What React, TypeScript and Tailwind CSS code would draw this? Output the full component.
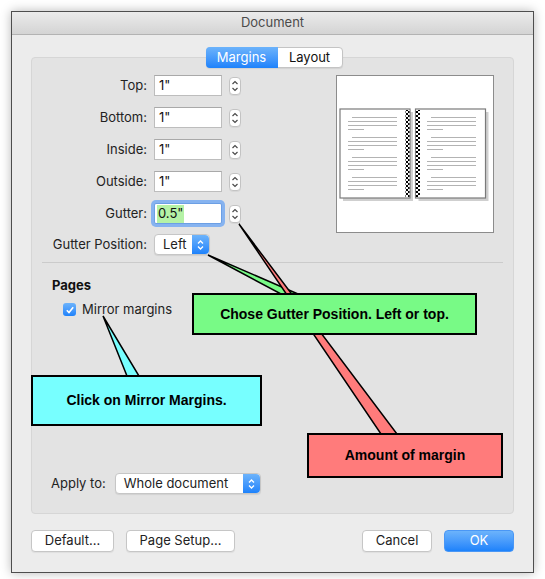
import React from 'react';

const font = { fontFamily: 'Inter, "Liberation Sans", sans-serif' };

const Stepper: React.FC = () => (
  <div className="w-[12px] h-[18px] rounded-[4px] border border-[#c3c3c3] bg-white flex items-center justify-center shadow-[0_1px_0_rgba(0,0,0,0.05)]">
    <svg width="10" height="16" viewBox="0 0 10 16">
      <path d="M2.5 6 L5 3.5 L7.5 6" fill="none" stroke="#4a4a4a" strokeWidth="1.2" />
      <path d="M2.5 10 L5 12.5 L7.5 10" fill="none" stroke="#4a4a4a" strokeWidth="1.2" />
    </svg>
  </div>
);

const BlueArrows: React.FC = () => (
  <div className="w-[17px] h-full rounded-r-[4px] bg-gradient-to-b from-[#6cb3fb] to-[#1c82fb] flex items-center justify-center">
    <svg width="9" height="14" viewBox="0 0 9 14">
      <path d="M2 5.5 L4.5 3 L7 5.5" fill="none" stroke="#fff" strokeWidth="1.3" />
      <path d="M2 8.5 L4.5 11 L7 8.5" fill="none" stroke="#fff" strokeWidth="1.3" />
    </svg>
  </div>
);

const Select: React.FC<{ label: string; width: string }> = ({ label, width }) => (
  <div className={`${width} h-[21px] flex rounded-[4px] bg-white border border-[#c6c6c6] shadow-[0_1px_1px_rgba(0,0,0,0.08)] text-[13px] text-[#222]`}>
    <div className="flex-1 pl-[8px] flex items-center leading-none">{label}</div>
    <BlueArrows />
  </div>
);

const Field: React.FC<{ label: string; value: string; focus?: boolean }> = ({ label, value, focus }) => (
  <>
    <div className="text-right text-[13px] text-[#222] h-[21px] flex items-center justify-end">{label}</div>
    <div
      className={`h-[21px] bg-white flex items-center text-[13px] text-[#111] ${
        focus
          ? 'border border-[#6c9fe4] shadow-[0_0_0_3px_#86b3f0] rounded-[2px] pl-[2px]'
          : 'border border-[#bdbdbd] border-t-[#a9a9a9] pl-[4px]'
      }`}
    >
      {focus ? <span className="bg-[#b5f2a6] h-[18px] px-[1px] flex items-center">{value}</span> : value}
    </div>
    <div className="h-[21px] flex items-center">
      <Stepper />
    </div>
  </>
);

const Preview: React.FC = () => {
  const groups = [0, 20, 40, 60];
  const page = (x: number, checkerX: number, lineX: number) => (
    <g>
      <rect x={x + 3} y={37} width={70} height={89} fill="#cfcfcf" />
      <rect x={x} y={34} width={70} height={89} fill="#fff" stroke="#7a7a7a" strokeWidth="1.2" />
      <rect x={checkerX} y={35} width={4} height={87} fill="url(#chk)" />
      {groups.map((g) => (
        <g key={g} stroke="#b3b3b3" strokeWidth="1">
          <line x1={lineX + 4} x2={lineX + 49} y1={42.5 + g} y2={42.5 + g} />
          <line x1={lineX} x2={lineX + 49} y1={46.5 + g} y2={46.5 + g} />
          <line x1={lineX} x2={lineX + 49} y1={50.5 + g} y2={50.5 + g} />
          <line x1={lineX} x2={lineX + 16} y1={54.5 + g} y2={54.5 + g} />
        </g>
      ))}
    </g>
  );
  return (
    <svg width="158" height="158" viewBox="0 0 158 158" className="block">
      <defs>
        <pattern id="chk" width="4" height="4" patternUnits="userSpaceOnUse">
          <rect width="4" height="4" fill="#fff" />
          <rect width="2" height="2" fill="#000" />
          <rect x="2" y="2" width="2" height="2" fill="#000" />
        </pattern>
      </defs>
      <rect x="0.5" y="0.5" width="157" height="157" fill="#fff" stroke="#8c8c8c" />
      {page(4, 69.5, 12)}
      {page(79.5, 80, 91)}
    </svg>
  );
};

const Button: React.FC<{ children: React.ReactNode; w: string; primary?: boolean }> = ({ children, w, primary }) => (
  <div
    className={`${w} h-[22px] rounded-[4px] flex items-center justify-center text-[13px] ${
      primary
        ? 'bg-gradient-to-b from-[#6cb3fb] to-[#1c82fb] text-white border border-[#4a97f5]'
        : 'bg-white text-[#222] border border-[#c6c6c6] shadow-[0_1px_1px_rgba(0,0,0,0.06)]'
    }`}
  >
    {children}
  </div>
);

const Callouts: React.FC = () => (
  <div className="absolute inset-0 pointer-events-none" style={{ fontFamily: '"Liberation Sans", Arial, sans-serif' }}>
    <svg width="545" height="579" className="absolute left-0 top-0">
      <polygon points="208,255 281,294 298,294" fill="#78fa86" stroke="#000" strokeWidth="1.5" strokeLinejoin="miter" />
      <polygon points="239,224 381,434 397,434" fill="#ff7b7b" stroke="#000" strokeWidth="1.5" />
      <polygon points="103,316 127,376 139,376" fill="#77ffff" stroke="#000" strokeWidth="1.5" />
    </svg>
    <div className="absolute left-[192px] top-[293px] w-[285px] h-[42px] bg-[#78fa86] border-2 border-black flex items-center justify-center text-[14px] font-bold text-black">
      Chose Gutter Position. Left or top.
    </div>
    <div className="absolute left-[31px] top-[375px] w-[231px] h-[51px] bg-[#77ffff] border-2 border-black flex items-center justify-center text-[14px] font-bold text-black">
      Click on Mirror Margins.
    </div>
    <div className="absolute left-[307px] top-[433px] w-[196px] h-[45px] bg-[#ff7b7b] border-2 border-black flex items-center justify-center text-[14px] font-bold text-black">
      Amount of margin
    </div>
  </div>
);

export default function App() {
  return (
    <div className="relative w-[545px] h-[579px] bg-white overflow-hidden" style={font}>
      <div className="pt-[11px] pl-[11px]">
        <div className="w-[523px] h-[562px] border border-[#4e4e4e] bg-[#ececec] flex flex-col shadow-[0_0_10px_rgba(0,0,0,0.28)]">
          <div className="h-[23px] border-b border-[#b3b3b3] bg-gradient-to-b from-[#ebebeb] to-[#d4d4d4] flex items-center justify-center text-[13px] text-[#4b4b4b]">
            Document
          </div>
          <div className="flex-1 flex flex-col px-[19px] pt-[12px]">
            <div className="relative z-10 flex justify-center -mb-[11px] pl-[3px]">
              <div className="flex h-[21px] rounded-[4px] border border-[#c4c4c4] bg-white shadow-[0_1px_1px_rgba(0,0,0,0.08)] text-[13px]">
                <div className="w-[72px] -my-px -ml-px rounded-l-[4px] bg-gradient-to-b from-[#6cb3fb] to-[#1c82fb] text-white flex items-center justify-center">
                  Margins
                </div>
                <div className="w-[64px] flex items-center justify-center text-[#111]">Layout</div>
              </div>
            </div>
            <div className="h-[457px] rounded-[4px] border border-[#d6d6d6] bg-[#e3e3e3] flex flex-col">
              <div className="flex pt-[17px] pl-[20px] pr-[19px]">
                <div className="grid grid-cols-[95px_68px_12px] gap-x-[7px] gap-y-[11px] items-center">
                  <Field label="Top:" value={'1"'} />
                  <Field label="Bottom:" value={'1"'} />
                  <Field label="Inside:" value={'1"'} />
                  <Field label="Outside:" value={'1"'} />
                  <Field label="Gutter:" value={'0.5"'} focus />
                  <div className="text-right text-[13px] text-[#222] h-[21px] flex items-center justify-end -mt-[1px]">
                    Gutter Position:
                  </div>
                  <div className="col-span-2 -mt-[1px]">
                    <Select label="Left" width="w-[56px]" />
                  </div>
                </div>
                <div className="ml-auto">
                  <Preview />
                </div>
              </div>
              <div className="mx-[10px] mt-[7px] h-px bg-[#cbcbcb]" />
              <div className="pl-[20px] mt-[14px] text-[13px] font-bold text-[#111] leading-[16px]">Pages</div>
              <div className="pl-[31px] mt-[7px] flex items-center gap-[6px] text-[13px] text-[#222]">
                <div className="w-[13px] h-[13px] rounded-[3px] bg-gradient-to-b from-[#6cb3fb] to-[#1c82fb] flex items-center justify-center">
                  <svg width="10" height="10" viewBox="0 0 10 10">
                    <path d="M1.8 5.2 L4 7.5 L8.2 2.2" fill="none" stroke="#fff" strokeWidth="1.6" />
                  </svg>
                </div>
                <span>Mirror margins</span>
              </div>
              <div className="flex-1" />
              <div className="pl-[19px] pb-[19px] flex items-center gap-[9px] text-[13px] text-[#222]">
                <span>Apply to:</span>
                <Select label="Whole document" width="w-[146px]" />
              </div>
            </div>
            <div className="mt-[16px] flex items-center">
              <Button w="w-[83px]">Default...</Button>
              <div className="w-[12px]" />
              <Button w="w-[109px]">Page Setup...</Button>
              <div className="flex-1" />
              <Button w="w-[70px]">Cancel</Button>
              <div className="w-[12px]" />
              <Button w="w-[70px]" primary>
                OK
              </Button>
            </div>
          </div>
        </div>
      </div>
      <Callouts />
    </div>
  );
}
